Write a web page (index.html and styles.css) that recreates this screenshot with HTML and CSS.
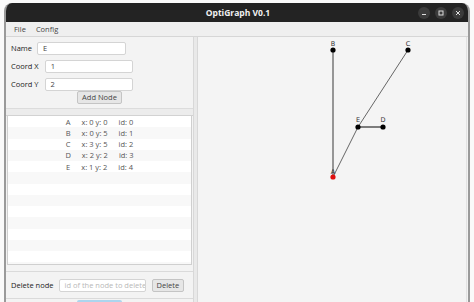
FILE: index.html
```html
<!DOCTYPE html>
<html>
<head>
<meta charset="utf-8">
<link rel="stylesheet" href="styles.css">
</head>
<body>
<div class="window">
  <div class="titlebar">
    <span class="title">OptiGraph V0.1</span>
    <div class="controls">
      <span class="ctl"><svg width="12" height="12" viewBox="0 0 12 12"><line x1="4" y1="7.5" x2="8" y2="7.5" stroke="#ddd" stroke-width="1"/></svg></span>
      <span class="ctl"><svg width="12" height="12" viewBox="0 0 12 12"><rect x="4" y="4" width="4" height="4" fill="none" stroke="#ddd" stroke-width="1"/></svg></span>
      <span class="ctl"><svg width="12" height="12" viewBox="0 0 12 12"><path d="M4 4 L8 8 M8 4 L4 8" stroke="#ddd" stroke-width="1"/></svg></span>
    </div>
  </div>
  <div class="menubar">
    <span class="menu">File</span>
    <span class="menu">Config</span>
  </div>
  <div class="main">
    <div class="leftpane">
      <div class="form">
        <div class="row"><span class="lbl">Name</span><span class="input w-name">E</span></div>
        <div class="row"><span class="lbl">Coord X</span><span class="input w-coord">1</span></div>
        <div class="row"><span class="lbl">Coord Y</span><span class="input w-coord">2</span></div>
        <div class="btnrow"><span class="btn">Add Node</span></div>
      </div>
      <div class="strip"></div>
      <div class="list">
        <div class="item"><span>A</span><span>x: 0 y: 0</span><span>id: 0</span></div>
        <div class="item"><span>B</span><span>x: 0 y: 5</span><span>id: 1</span></div>
        <div class="item"><span>C</span><span>x: 3 y: 5</span><span>id: 2</span></div>
        <div class="item"><span>D</span><span>x: 2 y: 2</span><span>id: 3</span></div>
        <div class="item"><span>E</span><span>x: 1 y: 2</span><span>id: 4</span></div>
        <div class="item"></div>
        <div class="item"></div>
        <div class="item"></div>
        <div class="item"></div>
        <div class="item"></div>
        <div class="item"></div>
        <div class="item"></div>
        <div class="item"></div>
        <div class="item"></div>
      </div>
      <div class="delrow">
        <span class="lbl">Delete node</span>
        <span class="input w-del placeholder">id of the node to delete</span>
        <span class="btn">Delete</span>
      </div>
      <div class="bottom"><span class="bluebtn"></span></div>
    </div>
    <div class="divider"></div>
    <div class="canvas">
      <svg class="graph" width="270" height="266" viewBox="197 37 270 266">
        <line x1="332" y1="50" x2="332" y2="177" stroke="#8c8c8c" stroke-width="1.8"/>
        <line x1="407" y1="50" x2="357" y2="127" stroke="#666" stroke-width="1"/>
        <line x1="357" y1="127" x2="332" y2="177" stroke="#666" stroke-width="1"/>
        <line x1="357" y1="127" x2="382" y2="127" stroke="#555" stroke-width="1.3"/>
        <circle cx="332" cy="50" r="2.6" fill="#000"/>
        <circle cx="407" cy="50" r="2.6" fill="#000"/>
        <circle cx="357" cy="127" r="2.6" fill="#000"/>
        <circle cx="382" cy="127" r="2.6" fill="#000"/>
        <circle cx="332" cy="177" r="2.6" fill="#e01010"/>
        <text x="332" y="46" class="nl">B</text>
        <text x="407" y="46" class="nl">C</text>
        <text x="357" y="122" class="nl">E</text>
        <text x="382" y="122" class="nl">D</text>
        <text x="332" y="174" class="nl">A</text>
      </svg>
    </div>
  </div>
</div>
</body>
</html>
```
FILE: styles.css
```css
html, body {
  margin: 0;
  padding: 0;
  background: #fafafa;
  overflow: hidden;
}
body {
  width: 474px;
  height: 302px;
  font-family: "Open Sans", "DejaVu Sans", sans-serif;
  font-size: 7.5px;
  color: #333;
}
.window {
  margin: 3px 4px 0 4px;
  height: 299px;
  display: flex;
  flex-direction: column;
  border-radius: 8px 8px 0 0;
  overflow: hidden;
  border-left: 2px solid #9a9a9a;
  border-right: 2px solid #9a9a9a;
  background: #f2f2f2;
}
.titlebar {
  height: 19px;
  background: #232323;
  display: flex;
  align-items: center;
  justify-content: center;
  position: relative;
  flex: none;
}
.title {
  color: #f2f2f2;
  font-weight: bold;
  font-size: 8.5px;
  margin-left: 2px;
}
.controls {
  position: absolute;
  right: 4px;
  top: 4px;
  display: flex;
  gap: 5px;
}
.ctl {
  width: 12px;
  height: 12px;
  border-radius: 50%;
  background: #3b3b3b;
  display: block;
}
.ctl svg { display: block; }
.menubar {
  height: 14px;
  background: #efefef;
  border-bottom: 1px solid #d6d6d6;
  display: flex;
  align-items: center;
  padding-left: 8px;
  gap: 10px;
  flex: none;
}
.menu { color: #444; font-size: 7.5px; }
.main {
  flex: 1;
  display: flex;
  min-height: 0;
}
.leftpane {
  width: 187px;
  display: flex;
  flex-direction: column;
  background: #f3f3f3;
  overflow: hidden;
}
.leftpane > * { flex-shrink: 0; }
.form {
  padding: 5px 0 4px 5px;
  display: flex;
  flex-direction: column;
  gap: 6px;
  border-bottom: 1px solid #dcdcdc;
}
.row {
  display: flex;
  align-items: center;
  height: 12px;
  gap: 5px;
}
.lbl { color: #222; }
.input {
  height: 11px;
  background: #fff;
  border: 1px solid #d4d4d4;
  border-radius: 2px;
  box-sizing: content-box;
  line-height: 11px;
  padding-left: 5px;
  color: #444;
  overflow: hidden;
  white-space: nowrap;
}
.w-name { width: 82px; }
.w-coord { width: 81px; margin-left: 1px; }
.w-del { width: 80px; }
.placeholder { color: #b8b8b8; }
.btnrow {
  display: flex;
  justify-content: center;
  margin-top: -5px;
  padding-right: 5px;
}
.btn {
  height: 11px;
  line-height: 11px;
  padding: 0 4px;
  background: #e6e6e6;
  border: 1px solid #c4c4c4;
  border-radius: 2px;
  color: #444;
}
.strip {
  height: 6px;
  background: #ececec;
  border-bottom: 1px solid #d2d2d2;
}
.list {
  margin: 0 1px;
  height: 148px;
  background: #fff;
  border: 1px solid #cfcfcf;
  border-top: none;
  overflow: hidden;
}
.item {
  height: 11.25px;
  display: flex;
  justify-content: center;
  align-items: center;
  gap: 11px;
  color: #555;
  font-size: 7.5px;
}
.item:nth-child(even) { background: #f8f8f8; }
.delrow {
  margin-top: 6px;
  border-top: 1px solid #dadada;
  border-bottom: 1px solid #dadada;
  height: 26px;
  display: flex;
  align-items: center;
  padding-left: 5px;
  gap: 5px;
}
.delrow .btn { margin-left: 1px; }
.bottom {
  height: 14px;
  display: flex;
  justify-content: center;
  padding-top: 1px;
}
.bluebtn {
  width: 45px;
  height: 12px;
  background: #acd5ee;
  border-radius: 2px;
}
.divider {
  width: 3px;
  background: #e9e9e9;
  border-left: 1px solid #d8d8d8;
  border-right: 1px solid #d8d8d8;
}
.canvas {
  flex: 1;
  background: #f4f4f4;
  border-right: 1px solid #e2e2e2;
  margin-right: 1px;
  overflow: hidden;
}
.graph { display: block; }
.nl {
  font-family: "DejaVu Sans", sans-serif;
  font-size: 6.5px;
  fill: #333;
  text-anchor: middle;
}
```
